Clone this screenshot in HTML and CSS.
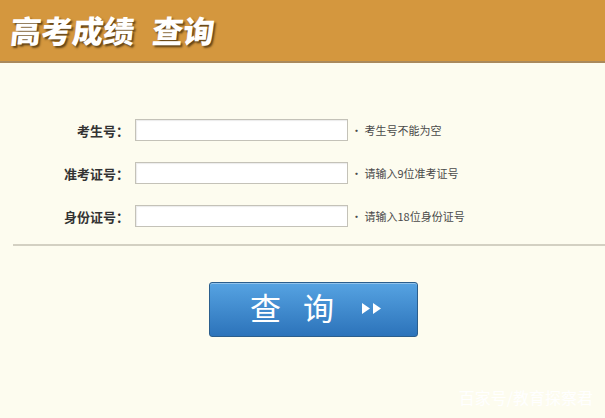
FILE: index.html
```html
<!DOCTYPE html>
<html lang="zh">
<head>
<meta charset="utf-8">
<link rel="stylesheet" href="styles.css">
</head>
<body>
<div class="page">
  <header class="header">
    <h1 class="title"><span>高考成绩</span><span>查询</span></h1>
  </header>
  <form class="form">
    <div class="row">
      <label class="label">考生号：</label>
      <input class="input" type="text">
      <span class="hint">• 考生号不能为空</span>
    </div>
    <div class="row">
      <label class="label">准考证号：</label>
      <input class="input" type="text">
      <span class="hint">• 请输入9位准考证号</span>
    </div>
    <div class="row">
      <label class="label">身份证号：</label>
      <input class="input" type="text">
      <span class="hint">• 请输入18位身份证号</span>
    </div>
  </form>
  <div class="divider"></div>
  <div class="actions">
    <button class="btn" type="button">
      <span class="btn-char">查</span>
      <span class="btn-char">询</span>
      <svg class="btn-icon" width="22" height="13" viewBox="0 0 22 13"><path d="M1 1 L9 6.5 L1 12 Z M12 1 L20 6.5 L12 12 Z" fill="#fff"/></svg>
    </button>
  </div>
  <div class="watermark">百家号/教育探察君</div>
</div>
</body>
</html>
```
FILE: styles.css
```css
* { box-sizing: border-box; }
html, body { margin: 0; padding: 0; }
body {
  background: #fdfcef;
  font-family: "Noto Sans CJK SC", "Liberation Sans", sans-serif;
  width: 605px;
  height: 418px;
  overflow: hidden;
}
.page { position: relative; height: 418px; }
.header {
  height: 63px;
  background: #d4973e;
  border-bottom: 2px solid #a9895c;
  display: flex;
  align-items: center;
  padding-left: 9px;
}
.title {
  margin: 0;
  color: #fff;
  font-size: 31px;
  font-weight: 900;
  text-shadow: 2px 2px 2px rgba(60,40,10,0.75);
  line-height: 1;
  margin-top: -3px;
  display: flex;
  gap: 18px;
  transform: skewX(-6deg);
  transform-origin: left bottom;
}
.form {
  display: flex;
  flex-direction: column;
  gap: 21px;
  padding-top: 56px;
}
.row {
  display: flex;
  align-items: center;
  height: 22px;
}
.label {
  width: 129px;
  text-align: right;
  font-size: 13px;
  font-weight: bold;
  color: #333;
}
.input {
  margin-left: 6px;
  width: 213px;
  height: 22px;
  border: 1px solid #c4c2b8;
  background: #fff;
  box-shadow: inset 1px 1px 1px rgba(0,0,0,0.08);
  padding: 0;
}
.hint {
  margin-left: 3px;
  font-size: 11px;
  color: #4a4a4a;
}
.divider {
  margin: 17px 0 0 13px;
  height: 2px;
  background: #d3d0c2;
}
.actions {
  padding-top: 36px;
  padding-left: 209px;
}
.btn {
  width: 209px;
  height: 55px;
  border: 1px solid #2b5e8c;
  border-radius: 3px;
  background: linear-gradient(#56a3e2, #2c73ba);
  box-shadow: inset 0 1px 0 rgba(255,255,255,0.35);
  display: flex;
  align-items: center;
  padding: 0 0 0 40px;
  cursor: pointer;
}
.btn-char {
  color: #fff;
  font-size: 31px;
  font-family: "Noto Sans CJK SC", sans-serif;
  font-weight: 400;
  line-height: 1;
  margin-right: 22px;
  margin-top: -6px;
}
.btn-char + .btn-char { margin-right: 27px; }
.btn-icon { display: block; margin-top: -2px; }
.watermark {
  position: absolute;
  right: 12px;
  bottom: 9px;
  color: #fff;
  font-size: 16px;
}
```
